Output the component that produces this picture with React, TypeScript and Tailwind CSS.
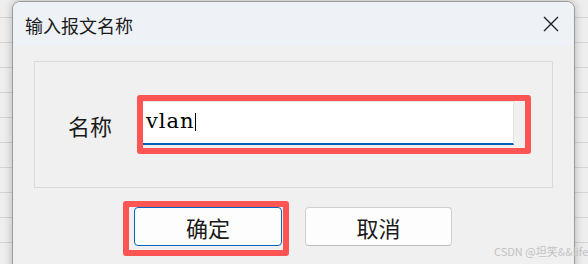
import React from "react";

export default function App() {
  const cjk = { fontFamily: '"Noto Sans CJK SC", "Noto Sans", sans-serif' };
  return (
    <div className="relative w-[588px] h-[264px] overflow-hidden bg-[#eeeeee] bg-[image:repeating-linear-gradient(to_bottom,transparent_0px,transparent_17px,#d4d4d4_17px,#d4d4d4_18px,transparent_18px,transparent_25px)]">
      <div className="flex pt-[1px]">
        <div className="w-[12px] shrink-0" />
        <div className="w-[563px] h-[300px] shrink-0 flex flex-col border border-[#9a9a9a] rounded-t-[8px] overflow-hidden bg-[#f0f0f0] shadow-[0_0_8px_rgba(0,0,0,0.25)]">
          <div className="h-[44px] shrink-0 bg-[#eef2f7] flex items-center justify-between pl-[12px] pr-[15px]">
            <span className="text-[18px] leading-none text-[#1b1b1b] pt-[2px]" style={cjk}>输入报文名称</span>
            <svg width="16" height="16" viewBox="0 0 16 16" className="block">
              <path d="M1 1 L15 15 M15 1 L1 15" stroke="#1b1b1b" strokeWidth="1.3" fill="none" />
            </svg>
          </div>
          <div className="px-[21px] pt-[15px] flex flex-col">
            <div className="h-[127px] border border-[#dadada] flex items-center pl-[33px]">
              <span className="text-[22px] leading-none text-[#1a1a1a] w-[45px]" style={cjk}>名称</span>
              <div className="ml-[24px] w-[394px] h-[59px] border-[6px] border-[#fd5454] rounded-[3px] pr-[11px] pb-[3px] flex">
                <div className="flex-1 bg-white border-t border-r border-[#e4e4e4] border-b-2 border-b-[#005fb8] flex items-center pl-[3px] pb-[2px]">
                  <span className="text-[21px] leading-none text-black tracking-[1px]" style={{ fontFamily: '"DejaVu Serif", serif' }}>vlan</span>
                  <span className="w-[1px] h-[18px] bg-black" />
                </div>
              </div>
            </div>
            <div className="mt-[13px] ml-[89px] flex items-start">
              <div className="border-[6px] border-[#fd5454] rounded-[3px] pl-[5px] pr-[1px] pb-[4px]">
                <div className="w-[148px] h-[39px] border border-[#0067c0] rounded-[4px] bg-[#fdfdfd] flex items-center justify-center text-[22px] leading-none text-[#1a1a1a]" style={cjk}>确定</div>
              </div>
              <div className="ml-[16px] mt-[6px] w-[147px] h-[39px] border border-[#d0d0d0] border-b-[#bdbdbd] rounded-[4px] bg-[#fdfdfd] flex items-center justify-center text-[22px] leading-none text-[#1a1a1a]" style={cjk}>取消</div>
            </div>
          </div>
        </div>
      </div>
      <div className="absolute left-[494px] top-[244px] text-[11px] leading-[14px] text-[#c2c2c2] whitespace-nowrap" style={cjk}>CSDN @坦笑&amp;&amp;life</div>
    </div>
  );
}
